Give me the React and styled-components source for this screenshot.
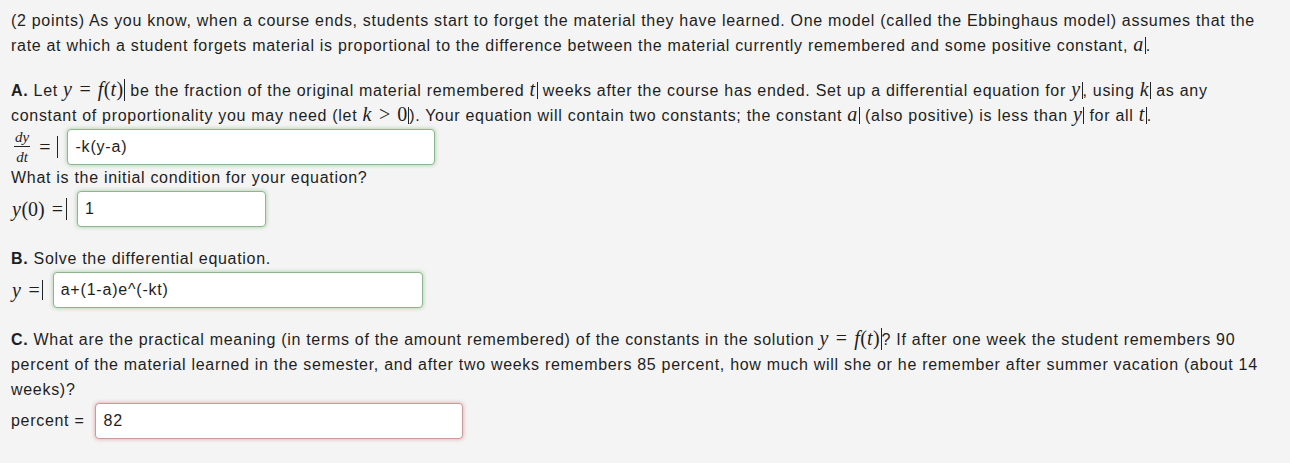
import React from "react";
import styled, { createGlobalStyle } from "styled-components";

const Global = createGlobalStyle`
  html, body { margin: 0; padding: 0; background: #f4f4f4; }
  body { font-family: "Liberation Sans", Arial, sans-serif; color: #1e1e1e; }
`;

const Page = styled.div`
  padding: 8px 11px 20px 11px;
  width: 1258px;
  font-size: 16px;
  letter-spacing: 0.7px;
  line-height: 25px;
`;

const Para = styled.p`
  margin: ${(p) => p.$mt || 0}px 0 0 0;
`;

const Part = styled.b`
  font-weight: bold;
`;

const M = styled.span`
  font-family: "Liberation Serif", "Times New Roman", serif;
  font-style: italic;
  font-size: 20px;
  letter-spacing: 0.5px;
  line-height: 0;
`;

const Up = styled.span`
  font-family: "Liberation Serif", "Times New Roman", serif;
  font-style: normal;
  font-size: 20px;
  letter-spacing: 0;
  line-height: 0;
  margin-left: ${(p) => (p.$l === undefined ? 7 : p.$l)}px;
  margin-right: ${(p) => (p.$r === undefined ? 7 : p.$r)}px;
`;

const Caret = styled.span`
  display: inline-block;
  width: 1px;
  height: ${(p) => p.$h || 17}px;
  background: #222;
  vertical-align: ${(p) => p.$va || -3}px;
  margin-left: 1px;
`;

const Row = styled.div`
  display: flex;
  align-items: center;
  height: 37px;
`;

const Label = styled.div`
  display: flex;
  align-items: center;
  padding-left: ${(p) => p.$pl || 0}px;
  margin-right: ${(p) => p.$mr || 10}px;
  white-space: nowrap;
`;

const Frac = styled.span`
  display: inline-flex;
  flex-direction: column;
  align-items: center;
  font-family: "Liberation Serif", "Times New Roman", serif;
  font-style: italic;
  font-size: 15px;
  line-height: 14px;
  letter-spacing: 0;
  margin: 0 0 0 3px;
`;

const Num = styled.span`
  padding: 0 1px 2px;
  border-bottom: 1px solid #222;
`;

const Den = styled.span`
  padding-top: 3px;
`;

const Answer = styled.div`
  box-sizing: border-box;
  width: ${(p) => p.$w || 368}px;
  height: 36px;
  background: #fff;
  border: 1px solid ${(p) => (p.$bad ? "#c99a9a" : "#8db68d")};
  border-radius: 4px;
  box-shadow: 0 0 4px ${(p) =>
    p.$bad ? "rgba(200, 60, 60, 0.45)" : "rgba(60, 150, 60, 0.45)"};
  padding: 0 7px;
  display: flex;
  align-items: center;
  font-size: 16px;
  letter-spacing: 0.8px;
  color: #1e1e1e;
`;

const Gap = styled.div`
  height: ${(p) => p.$h}px;
`;

export default function App() {
  return (
    <>
      <Global />
      <Page>
        <Para>
          (2 points) As you know, when a course ends, students start to forget
          the material they have learned. One model (called the Ebbinghaus
          model) assumes that the rate at which a student forgets material is
          proportional to the difference between the material currently
          remembered and some positive constant, <M>a</M>
          <Caret />.
        </Para>

        <Para $mt={20}>
          <Part>A.</Part> Let <M>y</M>
          <Up>=</Up>
          <M>f</M>
          <Up $l={0} $r={0}>(</Up>
          <M>t</M>
          <Up $l={0} $r={0}>)</Up>
          <Caret $h={22} $va={-5} /> be the fraction of the original material
          remembered <M>t</M>
          <Caret /> weeks after the course has ended. Set up a differential
          equation for <M>y</M>
          <Caret />, using <M>k</M>
          <Caret /> as any constant of proportionality you may need (let{" "}
          <M>k</M>
          <Up>&gt;</Up>
          <Up $l={0} $r={0}>0</Up>
          <Caret />
          ). Your equation will contain two constants; the constant <M>a</M>
          <Caret /> (also positive) is less than <M>y</M>
          <Caret /> for all <M>t</M>
          <Caret />.
        </Para>
        <Row>
          <Label $pl={0} $mr={9}>
            <Frac>
              <Num>dy</Num>
              <Den>dt</Den>
            </Frac>
            <Up $l={9} $r={6}>=</Up>
            <Caret $h={22} $va={0} />
          </Label>
          <Answer>-k(y-a)</Answer>
        </Row>
        <Para>What is the initial condition for your equation?</Para>
        <Row>
          <Label $pl={1} $mr={10}>
            <M>y</M>
            <Up $l={0} $r={0}>(0)</Up>
            <Up $l={7} $r={2}>=</Up>
            <Caret $h={22} $va={0} />
          </Label>
          <Answer $w={189}>1</Answer>
        </Row>

        <Para $mt={19}>
          <Part>B.</Part> Solve the differential equation.
        </Para>
        <Row>
          <Label $pl={1} $mr={10}>
            <M>y</M>
            <Up $l={7} $r={1}>=</Up>
            <Caret $h={20} $va={0} />
          </Label>
          <Answer $w={370}>a+(1-a)e^(-kt)</Answer>
        </Row>

        <Para $mt={19}>
          <Part>C.</Part> What are the practical meaning (in terms of the
          amount remembered) of the constants in the solution <M>y</M>
          <Up>=</Up>
          <M>f</M>
          <Up $l={0} $r={0}>(</Up>
          <M>t</M>
          <Up $l={0} $r={0}>)</Up>
          <Caret $h={22} $va={-5} />? If after one week the student remembers 90
          percent of the material learned in the semester, and after two weeks
          remembers 85 percent, how much will she or he remember after summer
          vacation (about 14 weeks)?
        </Para>
        <Row>
          <Label $mr={11}>percent =</Label>
          <Answer $bad>82</Answer>
        </Row>
        <Gap $h={10} />
      </Page>
    </>
  );
}
